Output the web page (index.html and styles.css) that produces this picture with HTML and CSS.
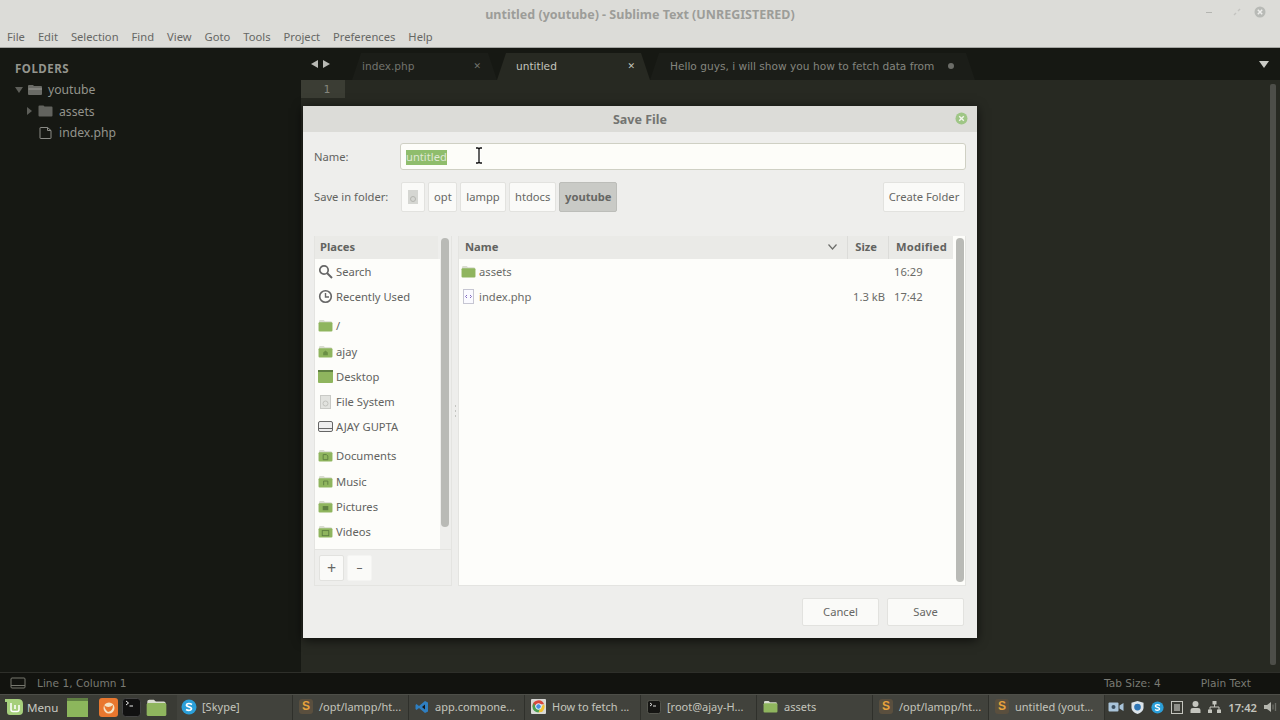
FILE: index.html
```html
<!DOCTYPE html>
<html lang="en">
<head>
    <meta charset="UTF-8">
    <title>untitled (youtube) - Sublime Text (UNREGISTERED)</title>
    <link rel="stylesheet" href="styles.css">
</head>
<body>
    <svg class="defs" width="0" height="0">
        <symbol id="folder" viewBox="0 0 16 14">
            <path d="M1 2.5 Q1 1 2.5 1 H6 L7.5 2.5 H13.5 Q15 2.5 15 4 V4.5 H1Z" fill="#d9dcd0"/>
            <rect x="0.5" y="3.5" width="15" height="10" rx="1.2" fill="#8fb55e"/>
        </symbol>
    </svg>

    <!-- window title -->
    <header class="titlebar">
        <div></div>
        <div class="title-text">untitled (youtube) - Sublime Text (UNREGISTERED)</div>
        <div class="win-controls">
            <span class="win-min"></span>
            <svg width="8" height="8" viewBox="0 0 8 8"><path d="M1 7 L3 5 M5 3 L7 1" stroke="#c4c4c0" stroke-width="1.4"/></svg>
            <svg width="12" height="12" viewBox="0 0 12 12"><circle cx="6" cy="6" r="5.5" fill="#b8bab6"/><path d="M3.8 3.8 L8.2 8.2 M8.2 3.8 L3.8 8.2" stroke="#eeeeec" stroke-width="1.5"/></svg>
        </div>
    </header>

    <nav class="menubar">
        <span>File</span><span>Edit</span><span>Selection</span><span>Find</span><span>View</span><span>Goto</span><span>Tools</span><span>Project</span><span>Preferences</span><span>Help</span>
    </nav>

    <main class="main">
        <!-- folder sidebar -->
        <aside class="sidebar">
            <div class="side-title">FOLDERS</div>
            <div class="side-row">
                <i class="arrow-down"></i>
                <svg class="side-icon" width="16" height="12" viewBox="0 0 16 12"><path d="M1 2 Q1 1 2 1 H6 L7 2 H14 Q15 2 15 3 V10 Q15 11 14 11 H2 Q1 11 1 10Z" fill="#6a6b66"/><path d="M1.5 5 H15" stroke="#9a9b96"/></svg>
                <span>youtube</span>
            </div>
            <div class="side-row side-child">
                <i class="arrow-right"></i>
                <svg class="side-icon" width="15" height="12" viewBox="0 0 15 12"><path d="M0.5 1.5 Q0.5 0.5 1.5 0.5 H5.5 L6.5 1.5 H13.5 Q14.5 1.5 14.5 2.5 V10.5 Q14.5 11.5 13.5 11.5 H1.5 Q0.5 11.5 0.5 10.5Z" fill="#62635e"/></svg>
                <span>assets</span>
            </div>
            <div class="side-row side-file">
                <svg class="side-icon" width="13" height="12" viewBox="0 0 13 12"><path d="M1 1 Q1 0.5 1.5 0.5 H8.5 L12 3.5 V11 Q12 11.5 11.5 11.5 H1.5 Q1 11.5 1 11Z M8.5 0.5 V3.5 H12" fill="none" stroke="#8a8b86"/></svg>
                <span>index.php</span>
            </div>
        </aside>

        <!-- editor -->
        <section class="editor">
            <div class="tabbar">
                <div class="tab-nav"><i class="nav-left"></i><i class="nav-right"></i></div>
                <div class="tab tab-first"><span>index.php</span><b>✕</b></div>
                <div class="tab tab-active"><span>untitled</span><b>✕</b></div>
                <div class="tab tab-long"><span>Hello guys, i will show you how to fetch data from</span><em></em></div>
                <i class="tab-menu"></i>
            </div>
            <div class="code">
                <div class="gutter-line">1</div>
                <div class="editor-scroll"></div>
            </div>
        </section>
    </main>

    <footer class="statusbar">
        <div class="status-left">
            <svg width="16" height="12" viewBox="0 0 16 12"><rect x="1" y="1" width="14" height="10" rx="1" fill="none" stroke="#77786f"/><path d="M1 8.5 H15" stroke="#77786f"/></svg>
            <span>Line 1, Column 1</span>
        </div>
        <div class="status-right"><span>Tab Size: 4</span><span>Plain Text</span></div>
    </footer>

    <!-- panel -->
    <div class="taskbar">
        <div class="menu-btn">
            <svg width="20" height="20" viewBox="0 0 20 20"><path d="M1 2 H14 Q19 2 19 7 V14 Q19 18 15 18 H6 Q3 18 3 15 V5 H1Z" fill="#a6cf7c"/><path d="M7 6 V12.5 Q7 14.5 9 14.5 H13 Q15 14.5 15 12.5 V8 M11 8 V12" fill="none" stroke="#fff" stroke-width="1.5"/></svg>
            <span>Menu</span>
        </div>
        <div class="launchers">
            <svg width="21" height="19" viewBox="0 0 21 19"><rect width="21" height="19" fill="#8cb65c"/><rect width="21" height="3" fill="#5f7f42"/></svg>
            <svg class="lnch-fx" width="19" height="19" viewBox="0 0 19 19"><rect width="19" height="19" rx="3" fill="#e9772e"/><circle cx="10" cy="10" r="5.5" fill="#f4e3c4"/><path d="M5 7 Q9 11 14 7 Q14 13 9 14 Q6 12 5 7Z" fill="#e9772e"/></svg>
            <svg width="19" height="19" viewBox="0 0 19 19"><rect x="0.5" y="0.5" width="18" height="18" rx="3" fill="#111" stroke="#444"/><path d="M4 3 L6.5 5 L4 7 M7.5 8 H11" fill="none" stroke="#eee"/></svg>
            <svg class="lnch-folder" width="21" height="19" viewBox="0 0 16 14"><use href="#folder"/></svg>
        </div>
        <div class="task task-skype">
            <svg width="16" height="16" viewBox="0 0 16 16"><circle cx="8" cy="8" r="7.5" fill="#2b9fd9"/><path d="M11 5.5 Q8 3.8 6 5 Q4.5 6.5 7 7.5 L9.5 8.5 Q11.5 9.8 9.5 11 Q7.5 12 5 10.5" fill="none" stroke="#fff" stroke-width="1.7"/></svg>
            <span>[Skype]</span>
        </div>
        <div class="task"><span class="sublime-badge">S</span><span>/opt/lampp/ht...</span></div>
        <div class="task">
            <svg width="14" height="14" viewBox="0 0 14 14"><path d="M10 1 L13 2.5 V11.5 L10 13 L4 8 L1.5 10 L0.5 9 V5 L1.5 4 L4 6Z" fill="#2f7fc1"/><path d="M10 4.5 V9.5 L7 7Z" fill="#16181a"/></svg>
            <span>app.compone...</span>
        </div>
        <div class="task">
            <svg width="15" height="15" viewBox="0 0 16 16"><rect width="16" height="16" rx="1" fill="#d9d9d6"/><path d="M1.5 8 A6.5 6.5 0 0 1 14 5.5 H8Z" fill="#d9483b"/><path d="M1.5 8 A6.5 6.5 0 0 0 8 14.5 L10.5 9 L5.5 9.5 L3 4Z" fill="#4a9d4e"/><path d="M14 5.5 A6.5 6.5 0 0 1 8 14.5 L11 8Z" fill="#f2c230"/><circle cx="8" cy="8" r="3" fill="#4a8fe0" stroke="#fff"/></svg>
            <span>How to fetch ...</span>
        </div>
        <div class="task">
            <svg width="14" height="14" viewBox="0 0 14 14"><rect x="0.5" y="0.5" width="13" height="13" rx="2" fill="#151513" stroke="#55564f"/><path d="M3 3 L5 4.5 L3 6 M6 6 H9" fill="none" stroke="#ddd"/></svg>
            <span>[root@ajay-H...</span>
        </div>
        <div class="task"><svg width="15" height="13" viewBox="0 0 16 14"><use href="#folder"/></svg><span>assets</span></div>
        <div class="task"><span class="sublime-badge">S</span><span>/opt/lampp/ht...</span></div>
        <div class="task task-current"><span class="sublime-badge">S</span><span>untitled (yout...</span></div>
        <div class="tray">
            <svg width="16" height="10" viewBox="0 0 15 10"><rect y="0.5" width="10" height="9" rx="1" fill="#a9c4da"/><circle cx="5" cy="5" r="2" fill="#3c4f60"/><path d="M11 3.5 L15 1 V9 L11 6.5Z" fill="#a9c4da"/></svg>
            <svg width="13" height="15" viewBox="0 0 14 15"><path d="M7 0.5 L13.5 2.5 V8 Q13 12.5 7 14.5 Q1 12.5 0.5 8 V2.5Z" fill="#dce4ea"/><circle cx="7" cy="7" r="3.6" fill="#2f76b5"/></svg>
            <svg width="13" height="13" viewBox="0 0 16 16"><circle cx="8" cy="8" r="7.5" fill="#2b9fd9"/><path d="M11 5.5 Q8 3.8 6 5 Q4.5 6.5 7 7.5 L9.5 8.5 Q11.5 9.8 9.5 11 Q7.5 12 5 10.5" fill="none" stroke="#fff" stroke-width="1.7"/></svg>
            <svg width="12" height="13" viewBox="0 0 12 13"><rect x="0.5" y="0.5" width="11" height="12" fill="none" stroke="#c4c5be"/><rect x="3" y="3" width="6" height="7" fill="#8f908a"/></svg>
            <svg width="11" height="12" viewBox="0 0 11 12"><circle cx="5.5" cy="3" r="3" fill="#c4c5be"/><path d="M0.5 12 V9 Q0.5 7 3 7 H8 Q10.5 7 10.5 9 V12Z" fill="#c4c5be"/></svg>
            <svg width="13" height="12" viewBox="0 0 13 12"><path d="M6.5 3 V6 M2 9 V6 H11 V9" fill="none" stroke="#c4c5be"/><rect x="4.5" y="0" width="4" height="3.5" fill="#c4c5be"/><rect y="8.5" width="4" height="3.5" fill="#c4c5be"/><rect x="9" y="8.5" width="4" height="3.5" fill="#c4c5be"/></svg>
            <span class="clock">17:42</span>
            <svg width="14" height="12" viewBox="0 0 14 12"><path d="M0 4 H3 L7 1 V11 L3 8 H0Z" fill="#b4b5ae"/><path d="M9 3.5 V8.5 M11.5 2 V10" stroke="#6c6d67" stroke-width="1.3"/></svg>
        </div>
    </div>

    <!-- save dialog -->
    <div class="dialog">
        <div class="dialog-title">
            <span>Save File</span>
            <svg class="dialog-close" width="13" height="13" viewBox="0 0 13 13"><circle cx="6.5" cy="6.5" r="6" fill="#9fc686"/><path d="M4.2 4.2 L8.8 8.8 M8.8 4.2 L4.2 8.8" stroke="#f2f5ec" stroke-width="1.4"/></svg>
        </div>
        <div class="dialog-body">
            <div class="name-row">
                <label>Name:</label>
                <div class="name-input"><span class="selected">untitled</span></div>
            </div>
            <div class="folder-row">
                <label>Save in folder:</label>
                <div class="crumbs">
                    <button class="crumb crumb-disk"><svg width="10" height="14" viewBox="0 0 10 14"><rect width="10" height="14" fill="#d5d6d2"/><circle cx="5" cy="9" r="2.5" fill="none" stroke="#b4b5b0"/></svg></button>
                    <button class="crumb">opt</button>
                    <button class="crumb">lampp</button>
                    <button class="crumb">htdocs</button>
                    <button class="crumb crumb-on">youtube</button>
                </div>
                <button class="btn btn-create">Create Folder</button>
            </div>
            <div class="panes">
                <div class="places">
                    <div class="places-head">Places</div>
                    <div class="places-list">
                        <div class="place">
                            <svg width="15" height="15" viewBox="0 0 15 15"><circle cx="6" cy="6" r="4.2" fill="none" stroke="#666" stroke-width="1.7"/><path d="M9 9 L14 14" stroke="#666" stroke-width="2"/></svg>
                            <span>Search</span>
                        </div>
                        <div class="place">
                            <svg width="15" height="15" viewBox="0 0 15 15"><circle cx="7.5" cy="7.5" r="5.8" fill="none" stroke="#666" stroke-width="1.6"/><path d="M7.5 4 V8 H11" fill="none" stroke="#666" stroke-width="1.4"/></svg>
                            <span>Recently Used</span>
                        </div>
                        <div class="place place-gap">
                            <svg width="15" height="13" viewBox="0 0 16 14"><use href="#folder"/></svg>
                            <span>/</span>
                        </div>
                        <div class="place">
                            <svg width="15" height="13" viewBox="0 0 16 14"><use href="#folder"/><path d="M5.5 11 V8 L8 6 L10.5 8 V11Z" fill="#6a8f45"/></svg>
                            <span>ajay</span>
                        </div>
                        <div class="place">
                            <svg width="15" height="13" viewBox="0 0 15 13"><rect width="15" height="13" rx="1" fill="#8fb55e"/><rect width="15" height="2" fill="#5f7f42"/></svg>
                            <span>Desktop</span>
                        </div>
                        <div class="place">
                            <svg class="place-disk" width="11" height="14" viewBox="0 0 11 14"><rect x="0.5" y="0.5" width="10" height="13" fill="#e2e3df" stroke="#c9cac6"/><circle cx="5.5" cy="8.5" r="2.5" fill="none" stroke="#c2c3be"/></svg>
                            <span>File System</span>
                        </div>
                        <div class="place">
                            <svg width="15" height="11" viewBox="0 0 15 11"><rect x="0.5" y="0.5" width="14" height="10" rx="1.5" fill="#eee" stroke="#666"/><path d="M1 7.5 H14" stroke="#666"/></svg>
                            <span>AJAY GUPTA</span>
                        </div>
                        <div class="place place-gap">
                            <svg width="15" height="13" viewBox="0 0 16 14"><use href="#folder"/><path d="M5.5 6 H9 L10.5 7.5 V11.5 H5.5Z" fill="none" stroke="#5f7f42"/></svg>
                            <span>Documents</span>
                        </div>
                        <div class="place">
                            <svg width="15" height="13" viewBox="0 0 16 14"><use href="#folder"/><path d="M6 11 V6.5 H10.5 V10.5" fill="none" stroke="#5f7f42"/></svg>
                            <span>Music</span>
                        </div>
                        <div class="place">
                            <svg width="15" height="13" viewBox="0 0 16 14"><use href="#folder"/><rect x="5" y="6.5" width="6" height="4.5" fill="#5f7f42"/></svg>
                            <span>Pictures</span>
                        </div>
                        <div class="place">
                            <svg width="15" height="13" viewBox="0 0 16 14"><use href="#folder"/><rect x="4.5" y="6" width="7" height="5.5" fill="none" stroke="#5f7f42"/></svg>
                            <span>Videos</span>
                        </div>
                    </div>
                    <div class="places-tools">
                        <button class="tool tool-add">+</button>
                        <button class="tool tool-del">–</button>
                    </div>
                    <div class="pane-scroll places-thumb"></div>
                </div>
                <div class="grip"><i></i><i></i><i></i></div>
                <div class="files">
                    <div class="files-head">
                        <div class="col-name">Name
                            <svg width="9" height="6" viewBox="0 0 9 6"><path d="M0.5 0.5 L4.5 5 L8.5 0.5" fill="none" stroke="#6c6d6a" stroke-width="1.2"/></svg>
                        </div>
                        <div class="col-size">Size</div>
                        <div class="col-mod">Modified</div>
                    </div>
                    <div class="file-row">
                        <div class="col-name"><span class="file-main"><svg width="15" height="13" viewBox="0 0 16 14"><use href="#folder"/></svg>assets</span></div>
                        <div class="col-size"></div>
                        <div class="col-mod">16:29</div>
                    </div>
                    <div class="file-row">
                        <div class="col-name"><span class="file-main"><svg class="php-icon" width="11" height="15" viewBox="0 0 11 15"><rect x="0.5" y="0.5" width="10" height="14" fill="#fafaff" stroke="#c6c6d2"/><path d="M4 6 L2.5 7.5 L4 9 M7 6 L8.5 7.5 L7 9" fill="none" stroke="#8069c0"/></svg>index.php</span></div>
                        <div class="col-size">1.3 kB</div>
                        <div class="col-mod">17:42</div>
                    </div>
                    <div class="pane-scroll files-thumb"></div>
                </div>
            </div>
            <div class="dialog-actions">
                <button class="btn btn-action">Cancel</button>
                <button class="btn btn-action">Save</button>
            </div>
        </div>
    </div>

    <!-- text cursor over the name field -->
    <svg class="ibeam" width="8" height="17" viewBox="0 0 8 17"><path d="M1 1 H3 L4 2 L5 1 H7 M4 2 V15 M1 16 H3 L4 15 L5 16 H7" fill="none" stroke="#fff" stroke-width="3"/><path d="M1 1 H3 L4 2 L5 1 H7 M4 2 V15 M1 16 H3 L4 15 L5 16 H7" fill="none" stroke="#111" stroke-width="1.3"/></svg>
</body>
</html>
```

FILE: styles.css
```css
* {
    margin: 0;
    padding: 0;
    box-sizing: border-box;
}

html, body {
    width: 1280px;
    height: 720px;
    overflow: hidden;
}

body {
    display: flex;
    flex-direction: column;
    position: relative;
    font-family: "Noto Sans", "Open Sans", sans-serif;
    font-size: 11.2px;
    background: #1a1c17;
    color: #666764;
}

.defs {
    position: absolute;
}

/* title and menu */
.titlebar {
    display: grid;
    grid-template-columns: 1fr auto 1fr;
    align-items: center;
    height: 28px;
    background: #dcdcd8;
}

.title-text {
    color: #9c9d99;
    font-size: 12.5px;
    font-weight: 700;
}

.win-controls {
    display: flex;
    justify-content: flex-end;
    align-items: center;
    gap: 13px;
    padding: 0 14px 4px 0;
}

.win-min {
    width: 6px;
    height: 1px;
    margin-right: 8px;
    background: #b4b5b1;
}

.menubar {
    display: flex;
    align-items: center;
    height: 20px;
    padding-left: 7px;
    padding-bottom: 3px;
    gap: 13px;
    background: #dcdcd8;
    border-bottom: 1px solid #a5a6a2;
    color: #666764;
}

/* main */
.main {
    flex: 1;
    display: flex;
    min-height: 0;
}

.sidebar {
    width: 301px;
    padding-top: 13px;
    background: #161813;
    color: #93948c;
    font-size: 12.2px;
}

.side-title {
    height: 18px;
    padding-left: 15px;
    color: #94958e;
    font-size: 11.5px;
    font-weight: 700;
    letter-spacing: 0.5px;
}

.side-row {
    display: flex;
    align-items: center;
    height: 21.5px;
    padding-left: 15px;
}

.side-icon {
    margin-right: 5px;
}

.side-child {
    padding-left: 27px;
}

.side-child .side-icon {
    margin-right: 6px;
}

.side-file .side-icon {
    margin-right: 7px;
}

.side-file {
    padding-left: 39px;
}

.arrow-down {
    width: 0;
    height: 0;
    margin-right: 4px;
    border-left: 4px solid transparent;
    border-right: 4px solid transparent;
    border-top: 6px solid #5d5e59;
}

.arrow-right {
    width: 0;
    height: 0;
    margin-right: 6px;
    border-top: 4px solid transparent;
    border-bottom: 4px solid transparent;
    border-left: 5px solid #5d5e59;
}

.editor {
    flex: 1;
    display: flex;
    flex-direction: column;
}

.tabbar {
    display: flex;
    align-items: flex-end;
    height: 32px;
    background: #161813;
    position: relative;
    font-family: "DejaVu Sans", sans-serif;
    font-size: 10.6px;
}

.tab-nav {
    display: flex;
    align-self: flex-start;
    gap: 5px;
    width: 51px;
    padding: 12px 0 0 10px;
}

.nav-left {
    border-top: 4px solid transparent;
    border-bottom: 4px solid transparent;
    border-right: 7px solid #b8b9b4;
}

.nav-right {
    border-top: 4px solid transparent;
    border-bottom: 4px solid transparent;
    border-left: 7px solid #b8b9b4;
}

.tab {
    display: flex;
    align-items: center;
    justify-content: space-between;
    height: 27px;
    padding-bottom: 1px;
    color: #72736d;
    background: #1b1d18;
    clip-path: polygon(0 100%, 9px 0, calc(100% - 9px) 0, 100% 100%);
    line-height: 27px;
}

.tab b {
    font-weight: 400;
    font-size: 9px;
}

.tab-first {
    width: 145px;
    padding-left: 10px;
    padding-right: 16px;
}

.tab-active {
    width: 153px;
    padding-left: 19px;
    padding-right: 15px;
    background: #272922;
    color: #c4c5be;
}

.tab-long {
    width: 325px;
    padding-left: 20px;
    padding-right: 21px;
    color: #84857f;
}

.tab-long em {
    width: 6px;
    height: 6px;
    border-radius: 50%;
    background: #6c6d68;
}

.tab-menu {
    position: absolute;
    right: 11px;
    top: 13px;
    border-left: 5px solid transparent;
    border-right: 5px solid transparent;
    border-top: 7px solid #c9cac5;
}

.code {
    flex: 1;
    position: relative;
    background: #272922;
}

.gutter-line {
    width: 44px;
    height: 18px;
    background: #3b3d34;
    color: #85867d;
    font-family: "DejaVu Sans Mono", monospace;
    font-size: 11px;
    line-height: 19px;
    text-align: right;
    padding-right: 15px;
}

.editor-scroll {
    position: absolute;
    top: 4px;
    bottom: 7px;
    right: 4px;
    width: 6px;
    background: #4d4e49;
    border-radius: 2px;
}

.statusbar {
    display: flex;
    justify-content: space-between;
    align-items: center;
    height: 22px;
    padding-bottom: 1px;
    background: #12130f;
    border-top: 1px solid #2e2f2a;
    color: #797a73;
    font-family: "DejaVu Sans", sans-serif;
    font-size: 10.6px;
}

.status-left {
    display: flex;
    align-items: center;
    gap: 11px;
    padding-left: 10px;
}

.status-right {
    display: flex;
    gap: 40px;
    padding-right: 29px;
}

/* panel */
.taskbar {
    display: flex;
    align-items: center;
    height: 26px;
    background: #3a3b35;
    border-top: 1px solid #4d4e48;
    color: #c4c5bd;
    font-size: 11px;
}

.menu-btn {
    display: flex;
    align-items: center;
    gap: 3px;
    width: 67px;
    padding: 0 0 1px 4px;
    color: #c8c9c2;
    font-size: 11.6px;
}

.launchers {
    display: flex;
    align-items: center;
    gap: 4px;
    width: 110px;
}

.lnch-fx {
    margin-left: 7px;
}

.lnch-folder {
    margin-left: 1px;
}

.task {
    display: flex;
    align-items: center;
    gap: 6px;
    width: 116px;
    height: 25px;
    padding: 0 0 2px 6px;
    border-right: 1px solid #2f302b;
    background: #41423c;
    white-space: nowrap;
}

.task-skype {
    padding-left: 4px;
    gap: 5px;
}

.task-current {
    background: #484943;
}

.sublime-badge {
    width: 14px;
    height: 15px;
    border-radius: 3px;
    background: #5a4f3e;
    color: #e8a33c;
    font-family: "Liberation Sans", sans-serif;
    font-size: 12px;
    font-weight: 700;
    line-height: 15px;
    text-align: center;
}

.tray {
    flex: 1;
    display: flex;
    align-items: center;
    justify-content: flex-end;
    gap: 7px;
    padding: 0 2px 1px 0;
}

.tray span {
    font-size: 11.2px;
}

.clock {
    font-weight: 600;
}

/* save dialog */
.dialog {
    position: absolute;
    left: 303px;
    top: 106px;
    width: 674px;
    height: 532px;
    display: flex;
    flex-direction: column;
    background: #eeeeec;
    box-shadow: 0 2px 10px rgba(0, 0, 0, 0.7);
    color: #62635f;
}

.dialog-title {
    position: relative;
    height: 26px;
    line-height: 27px;
    flex-shrink: 0;
    text-align: center;
    background: #dcdcd8;
    color: #737471;
    font-size: 12.5px;
    font-weight: 700;
}

.dialog-close {
    position: absolute;
    right: 9px;
    top: 6px;
}

.dialog-body {
    flex: 1;
    display: flex;
    flex-direction: column;
    padding: 11px 11px 12px;
    min-height: 0;
}

.name-row {
    display: flex;
    align-items: center;
    height: 27px;
}

.name-row label {
    width: 86px;
}

.name-input {
    flex: 1;
    height: 27px;
    padding: 5px 5px 0;
    background: #fdfdf9;
    border: 1px solid #cfd0c4;
    border-radius: 3px;
}

.selected {
    display: inline-block;
    height: 15px;
    line-height: 14px;
    background: #8fbd6c;
    color: #dfe8d4;
}

.folder-row {
    display: flex;
    align-items: center;
    height: 30px;
    margin-top: 12px;
}

.folder-row label {
    width: 87px;
    padding-bottom: 1px;
}

.crumbs {
    flex: 1;
    display: flex;
    gap: 3px;
}

.crumb, .btn, .tool {
    font-family: inherit;
    font-size: 11.2px;
    color: #666764;
    background: #fafaf8;
    border: 1px solid #e2e2df;
    border-radius: 2px;
    padding-bottom: 1px;
}

.crumb {
    height: 30px;
    padding-left: 5px;
    padding-right: 5px;
}

.crumb-disk {
    width: 24px;
    padding-top: 3px;
}

.crumb:nth-child(2) {
    width: 29px;
}

.crumb:nth-child(3) {
    width: 46px;
}

.crumb:nth-child(4) {
    width: 47px;
}

.crumb-on {
    width: 58px;
    background: #c9cac6;
    border-color: #bcbdb9;
    font-weight: 700;
}

.btn-create {
    width: 82px;
    height: 30px;
    margin-right: 1px;
}

.panes {
    flex: 1;
    display: flex;
    margin-top: 24px;
    min-height: 0;
}

.places {
    position: relative;
    width: 138px;
    display: flex;
    flex-direction: column;
    border: 1px solid #e4e4e1;
    border-top: 0;
}

.places-head, .files-head {
    height: 23px;
    line-height: 22px;
    flex-shrink: 0;
    background: #eaeae7;
    font-weight: 700;
    color: #62635f;
}

.places-head {
    padding-left: 5px;
    margin-right: 13px;
}

.places-list {
    flex: 1;
    background: linear-gradient(to right, #fdfdfa 125px, #eeeeec 125px);
    overflow: hidden;
}

.place {
    display: flex;
    align-items: center;
    gap: 3px;
    height: 25.3px;
    padding-left: 3px;
}

.place-gap {
    margin-top: 3.5px;
}

.place-disk {
    margin: 0 2px;
}

.pane-scroll {
    position: absolute;
    width: 8px;
    background: #b9bab6;
    border-radius: 4px;
}

.places-thumb {
    top: 2px;
    left: 126px;
    height: 289px;
}

.places-tools {
    display: flex;
    gap: 3px;
    height: 36px;
    flex-shrink: 0;
    padding: 5px 0 0 4px;
    border-top: 1px solid #e4e4e1;
}

.tool {
    width: 25px;
    height: 26px;
    font-size: 16px;
    line-height: 20px;
}

.tool-del {
    border-color: #f4f4f2;
    font-size: 12px;
}

.grip {
    width: 6px;
    display: flex;
    flex-direction: column;
    justify-content: center;
    align-items: center;
    gap: 3px;
}

.grip i {
    width: 1px;
    height: 2px;
    background: #c4c5c1;
}

.files {
    position: relative;
    flex: 1;
    background: #fdfdfa;
    border: 1px solid #e4e4e1;
    border-top: 0;
    padding-right: 12px;
}

.files-head {
    display: flex;
}

.files-head .col-name {
    justify-content: space-between;
    padding: 0 10px 1px 6px;
    align-items: center;
    border-right: 1px solid #dcdcd9;
}

.files-head .col-size {
    border-right: 1px solid #dcdcd9;
    padding-right: 11px;
}

.files-head .col-mod {
    padding-left: 7px;
    letter-spacing: 0.2px;
}

.col-name {
    display: flex;
    width: 389px;
}

.col-size {
    width: 41px;
    text-align: right;
    padding-right: 4px;
}

.col-mod {
    flex: 1;
    padding-left: 5px;
    white-space: nowrap;
}

.file-row {
    display: flex;
    align-items: center;
    height: 25.3px;
    color: #6a6b67;
}

.file-main {
    display: flex;
    align-items: center;
    gap: 3px;
    padding-left: 2px;
}

.php-icon {
    margin: 0 2px;
}

.files-thumb {
    top: 2px;
    right: 1px;
    bottom: 3px;
}

.dialog-actions {
    display: flex;
    justify-content: flex-end;
    gap: 8px;
    margin-top: 12px;
    margin-right: 2px;
}

.btn-action {
    width: 77px;
    height: 28px;
}

.ibeam {
    position: absolute;
    left: 475px;
    top: 147px;
}
```
